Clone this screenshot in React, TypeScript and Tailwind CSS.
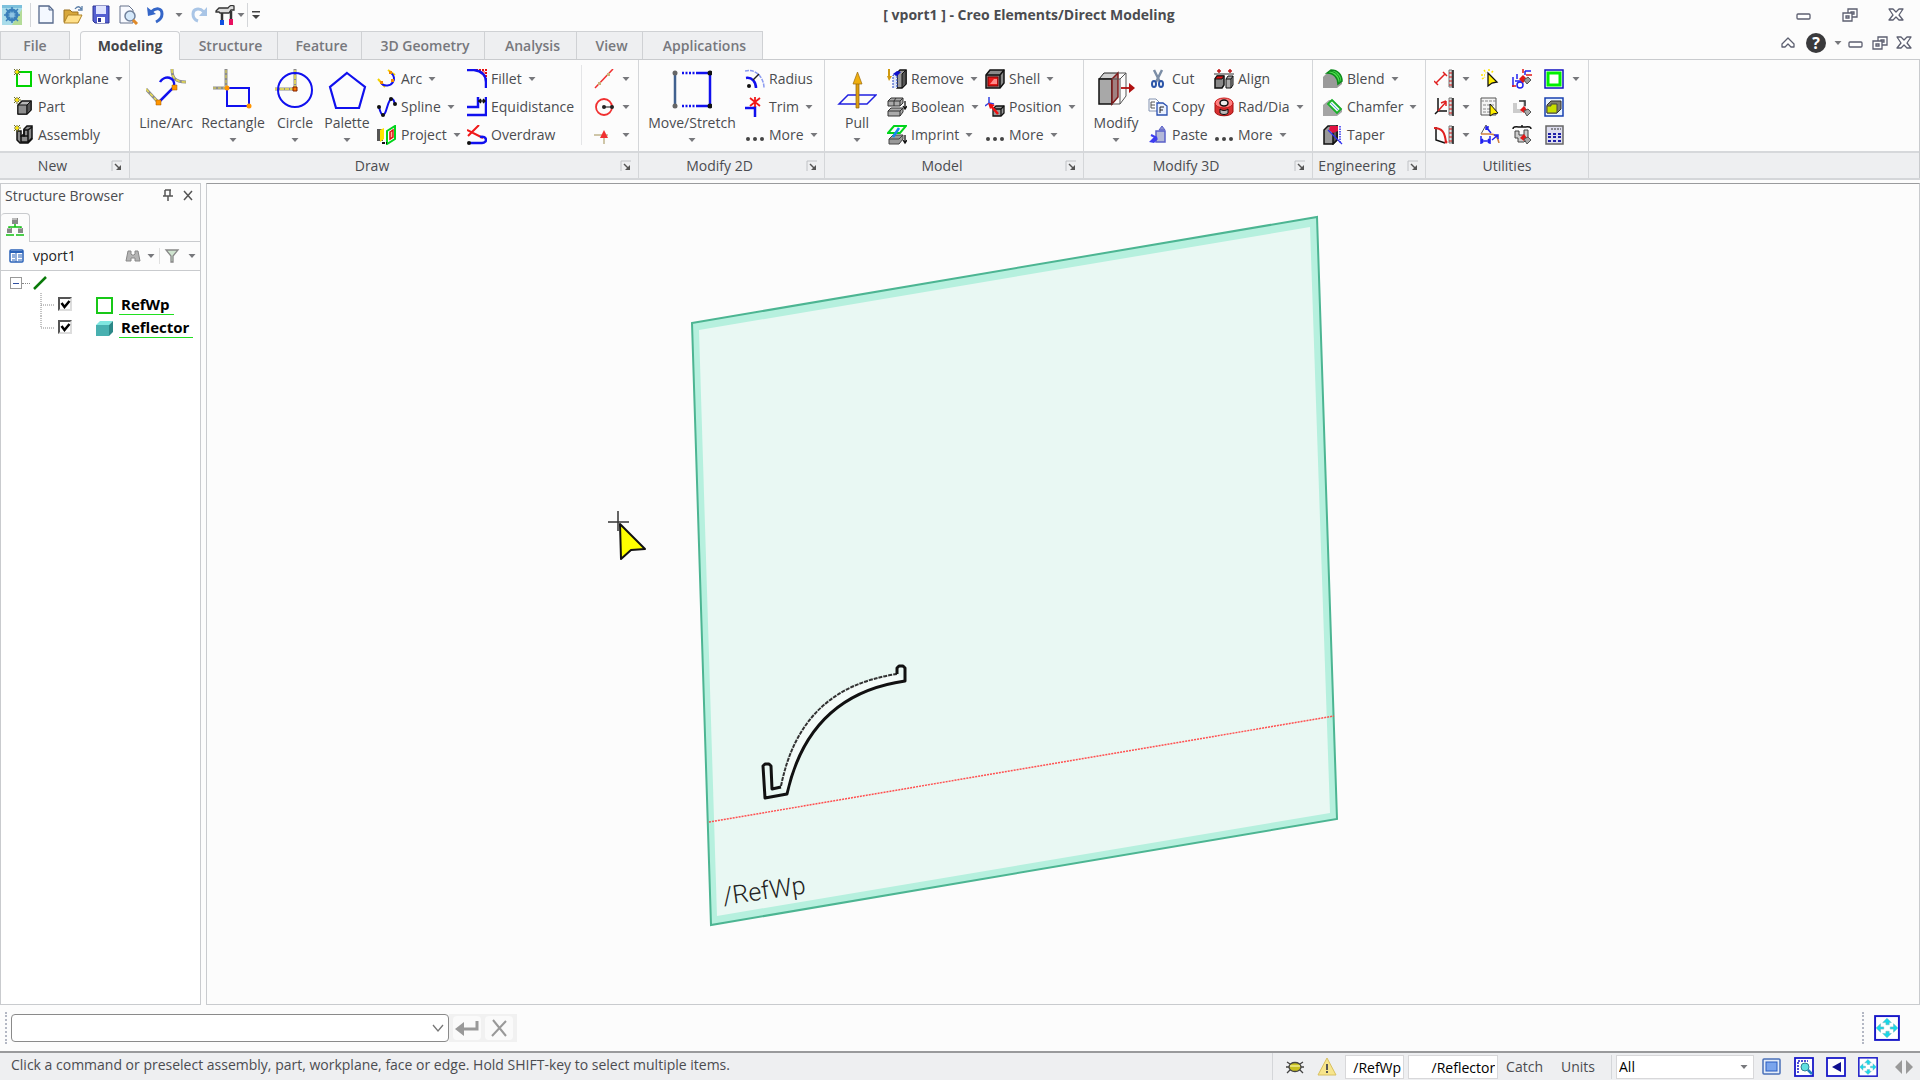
import type { ReactNode } from 'react';

type IconProps = { children: ReactNode };

const Small = ({ children }: IconProps) => (
    <svg className="w-5 h-5 shrink-0" viewBox="0 0 20 20" fill="none" aria-hidden="true">{children}</svg>
);

const Big = ({ children }: IconProps) => (
    <svg className="w-10 h-10 shrink-0" viewBox="0 0 40 40" fill="none" aria-hidden="true">{children}</svg>
);

const Caret = () => (
    <svg className="w-2 h-1 shrink-0" viewBox="0 0 8 4" aria-hidden="true">
        <path d="M0.5 0h7L4 4z" fill="#77787c"/>
    </svg>
);

const Spark = () => (
    <g>
        <path d="M0 0l6 6M6 0L0 6M3 -1v8M-1 3h8" stroke="#6b6b20" strokeWidth="1"/>
        <path d="M1.5 3h3M3 1.5v3" stroke="#ffe600" strokeWidth="2"/>
    </g>
);

/* ---------- small ribbon icons ---------- */

const WorkplaneIcon = () => (
    <Small>
        <rect x="3" y="3" width="14" height="14" stroke="#00d400" strokeWidth="2"/>
        <Spark/>
    </Small>
);

const PartIcon = () => (
    <Small>
        <path d="M4 8l4-4h9v9l-4 4H4z" fill="#b8b8b8" stroke="#111" strokeWidth="1.5"/>
        <path d="M4 8h9v9H4z" fill="#8e8e8e" stroke="#111"/>
        <path d="M13 17V8l4-4v9z" fill="#555" stroke="#111"/>
        <Spark/>
    </Small>
);

const AssemblyIcon = () => (
    <Small>
        <path d="M3 6h4v5h3v-7l3-3h5v13l-4 4H6l-3-3z" fill="#8a8a8a" stroke="#111" strokeWidth="1.5"/>
        <path d="M10 5h4v6h-4zM14 5l4-3M7 11v6h7v-6M14 17l4-4M7 11l3-2" stroke="#111" strokeWidth="1.5"/>
        <Spark/>
    </Small>
);

const ArcIcon = () => (
    <Small>
        <path d="M1 10l7 8M11 1l7 5" stroke="#f2d200" strokeWidth="2"/>
        <path d="M4 14c3 4 10 3 12-1 2-3 1-7-2-9" stroke="#1010ee" strokeWidth="2"/>
        <path d="M3 12h3v3H3zM12 2h3v3h-3zM14 10h3v3h-3z" fill="#f28a00"/>
    </Small>
);

const SplineIcon = () => (
    <Small>
        <path d="M2 10c1 4 2 8 4 8 4 0 4-16 9-16 2 0 2 3 3 5" stroke="#1010ee" strokeWidth="2"/>
        <circle cx="2" cy="10" r="2" fill="#111"/>
        <circle cx="6" cy="18" r="2" fill="#111"/>
        <circle cx="14" cy="2" r="2" fill="#111"/>
        <circle cx="18" cy="7" r="2" fill="#111"/>
    </Small>
);

const ProjectIcon = () => (
    <Small>
        <path d="M0 4h6v12H0z" fill="#555"/>
        <path d="M3 5l4-2v11l-4 3z" fill="#ffe600"/>
        <path d="M10 6l8-5v13l-8 5z" fill="#fff" stroke="#00d41a" strokeWidth="2"/>
        <path d="M13 7l3-2v7l-3 2z" fill="#ffb0a0" stroke="#e01010" strokeWidth="1.5"/>
        <path d="M5 18h5" stroke="#111" strokeWidth="2" strokeDasharray="3 1"/>
    </Small>
);

const FilletIcon = () => (
    <Small>
        <path d="M9 1h10v10" stroke="#e81010" strokeWidth="2" strokeDasharray="2 1"/>
        <path d="M11 2h7v7z" fill="#ff8a8a"/>
        <path d="M0 1h7c7 1 12 5 12 12v6" stroke="#1010ee" strokeWidth="2.5"/>
    </Small>
);

const EquidistanceIcon = () => (
    <Small>
        <path d="M0 10h11V0M0 18h19V0" stroke="#1010ee" strokeWidth="2.5"/>
        <path d="M11 4h7M14 2l-2 2 2 2M16 2l2 2-2 2" stroke="#111" strokeWidth="1.5"/>
    </Small>
);

const OverdrawIcon = () => (
    <Small>
        <path d="M0 5l16 8M12 0L1 11" stroke="#f01818" strokeWidth="2"/>
        <path d="M3 18h12M13 12c7-2 8 6 2 6" stroke="#1010ee" strokeWidth="2.5"/>
        <circle cx="2" cy="18" r="2" fill="#111"/>
    </Small>
);

const ConstLineIcon = () => (
    <Small>
        <path d="M1 19L19 0" stroke="#f03030" strokeWidth="1.5"/>
        <path d="M4 13h3v3H4zM13 4h3v3h-3z" fill="#c9b37a"/>
    </Small>
);

const ConstCircleIcon = () => (
    <Small>
        <circle cx="10" cy="10" r="8" stroke="#f03030" strokeWidth="1.8"/>
        <path d="M10 10h8" stroke="#111"/>
        <circle cx="10" cy="10" r="2" fill="#222"/>
        <circle cx="18" cy="10" r="2" fill="#222"/>
    </Small>
);

const ConstPointIcon = () => (
    <Small>
        <path d="M0 10h14M10 7v12" stroke="#cfc6a8" strokeWidth="2"/>
        <path d="M6 13l4-8 4 8z" fill="#f03030"/>
    </Small>
);

const RadiusIcon = () => (
    <Small>
        <path d="M0 2c10-3 19 6 19 17" stroke="#8a9af0" strokeWidth="1.5" strokeDasharray="4 1"/>
        <path d="M1 9c6-1 10 4 10 10" stroke="#1010ee" strokeWidth="2.5"/>
        <path d="M8 11l6-6" stroke="#222" strokeWidth="1.5"/>
        <circle cx="4" cy="17" r="2" fill="#111"/>
    </Small>
);

const TrimIcon = () => (
    <Small>
        <path d="M0 11h10M10 9v11" stroke="#1010ee" strokeWidth="2.5"/>
        <path d="M5 1l10 8M15 1L5 9M10 0v10" stroke="#f01818" strokeWidth="1.8"/>
    </Small>
);

const MoreIcon = () => (
    <Small>
        <circle cx="3" cy="14" r="2" fill="#444"/>
        <circle cx="10" cy="14" r="2" fill="#444"/>
        <circle cx="17" cy="14" r="2" fill="#444"/>
    </Small>
);

const RemoveIcon = () => (
    <Small>
        <path d="M10 4l3-3h6v14l-4 4h-5z" fill="#999" stroke="#111" strokeWidth="1.5"/>
        <path d="M15 5l4-4v14l-4 4z" fill="#555" stroke="#111"/>
        <path d="M6 19V6h4v13" fill="#dde6f8" stroke="#2040c0" strokeDasharray="2 1"/>
        <path d="M6 5l4-3 4 1-4 4z" fill="#1010cc"/>
        <path d="M2 0v8" stroke="#d09a10" strokeWidth="2"/>
        <path d="M0 7h5l-3 5z" fill="#d09a10"/>
    </Small>
);

const BooleanIcon = () => (
    <Small>
        <path d="M1 4l3-3h12v5l-3 3H1z" fill="#aaa" stroke="#333"/>
        <path d="M1 4h12l3-3M9 1L7 4v5M13 4v5" stroke="#333"/>
        <path d="M1 14l3-3h12v4l-3 4H1z" fill="#aaa" stroke="#333"/>
        <path d="M1 14h12l3-3M13 14v5" stroke="#333"/>
        <path d="M18 4v7M16 9l2 3 2-3" stroke="#111" strokeWidth="1.3"/>
    </Small>
);

const ImprintIcon = () => (
    <Small>
        <path d="M2 14l4-4h10v4l-4 5H2z" fill="#999" stroke="#444"/>
        <path d="M2 14h10l4-4" stroke="#444"/>
        <path d="M1 8l6-7h12l-6 7z" stroke="#00d41a" strokeWidth="2"/>
        <path d="M12 3L6 12" stroke="#1688f0" strokeWidth="2.5"/>
        <path d="M18 10v7M16 15l2 3 2-3" stroke="#111" strokeWidth="1.3"/>
    </Small>
);

const ShellIcon = () => (
    <Small>
        <path d="M1 6l4-5h14v13l-4 5H1z" fill="#8a8a8a" stroke="#111" strokeWidth="1.5"/>
        <path d="M15 19V6l4-5M1 6h14" stroke="#111" strokeWidth="1.5"/>
        <rect x="3" y="8" width="10" height="9" fill="#e81818" stroke="#7a0000"/>
        <path d="M5 15l4-5h3v5z" fill="#ff8a8a"/>
    </Small>
);

const PositionIcon = () => (
    <Small>
        <path d="M4 0v6l5 1M4 6l-4 3" stroke="#3040e0" strokeWidth="1.5"/>
        <path d="M8 12l3-3h8v7l-3 3H8z" fill="#999" stroke="#111" strokeWidth="1.3"/>
        <path d="M8 12h8l3-3M16 12v7" stroke="#111" strokeWidth="1.3"/>
        <path d="M13 17L6 9" stroke="#f01010" strokeWidth="2.5"/>
        <path d="M3 6l7 2-5 4z" fill="#f01010"/>
    </Small>
);

const CutIcon = () => (
    <Small>
        <path d="M6 1l6 12M14 1L8 13" stroke="#7c8ea6" strokeWidth="2.5"/>
        <ellipse cx="6" cy="15" rx="2" ry="3" stroke="#2b55a8" strokeWidth="2"/>
        <ellipse cx="13" cy="15" rx="2" ry="3" stroke="#2b55a8" strokeWidth="2"/>
    </Small>
);

const CopyIcon = () => (
    <Small>
        <path d="M1 2h7l3 3v9H1z" fill="#fff" stroke="#8292b0"/>
        <path d="M3 5h4M3 8h4M3 11h4M3 5v6" stroke="#555"/>
        <path d="M9 6h6l4 3v9H9z" fill="#eaf1ff" stroke="#2a50b0" strokeWidth="1.3"/>
        <path d="M12 16v-6h4M12 13h3" stroke="#222"/>
    </Small>
);

const PasteIcon = () => (
    <Small>
        <path d="M8 6h9v11H8z" fill="#b4b8d8" stroke="#5a60c8" strokeWidth="1.5"/>
        <path d="M11 5l3-4 3 4z" fill="#8a8ed0" stroke="#5a60c8"/>
        <path d="M1 17l6-6 3 3-4 4z" fill="#3c3cf0"/>
        <path d="M3 10l6 3" stroke="#3c3cf0" strokeWidth="2"/>
    </Small>
);

const AlignIcon = () => (
    <Small>
        <path d="M0 5h20" stroke="#333"/>
        <path d="M3 2h4M5 0v4M14 2h4M16 0v4" stroke="#c01818" strokeWidth="1.5"/>
        <path d="M1 10l2-3h7v9l-2 3H1z" fill="#888" stroke="#111" strokeWidth="1.5"/>
        <path d="M3 7h7l-2 3H1z" fill="#e01010" stroke="#111"/>
        <path d="M12 10l2-3h5v9l-2 3h-5z" fill="#aaa" stroke="#111"/>
        <path d="M12 10h5l2-3M17 10v9" stroke="#111"/>
    </Small>
);

const RadDiaIcon = () => (
    <Small>
        <path d="M1 6v9c2 5 16 5 18 0V6z" fill="#d83030" stroke="#a01010"/>
        <ellipse cx="10" cy="6" rx="9" ry="5" fill="#ff8080" stroke="#c81818"/>
        <ellipse cx="10" cy="6" rx="4" ry="3" fill="#eee" stroke="#111" strokeWidth="1.5"/>
        <path d="M6 12c2 2 6 2 8 0v4c-2 2-6 2-8 0z" fill="#bbb" stroke="#111"/>
    </Small>
);

const BlendIcon = () => (
    <Small>
        <path d="M0 8l5-5h5l9 9v3l-5 4H0z" fill="#9a9a9a"/>
        <path d="M4 4l4-3c7 0 11 5 11 11l-4 3c0-6-4-11-11-11z" fill="#4ede4e" stroke="#0c8a1a" strokeWidth="1.5"/>
        <path d="M7 2c6 1 10 5 10 11" stroke="#0c8a1a"/>
    </Small>
);

const ChamferIcon = () => (
    <Small>
        <path d="M0 8l6-5h4l9 9v3l-5 4H0z" fill="#a4a4a4"/>
        <path d="M5 7l4-4 9 9-4 4z" fill="#e9fbe9" stroke="#18b028" strokeWidth="1.8"/>
        <path d="M8 6l7 7" stroke="#60a0f0"/>
    </Small>
);

const TaperIcon = () => (
    <Small>
        <path d="M1 5l4-4h9v14l-4 4H1z" fill="#999" stroke="#111" strokeWidth="1.5"/>
        <path d="M10 19V5l4-4v14z" fill="#555" stroke="#111" strokeWidth="1.5"/>
        <path d="M7 1h8v5l-5 2-4-3z" fill="#e01040"/>
        <path d="M17 1v17" stroke="#3030f0" strokeWidth="1.5" strokeDasharray="1.5 1"/>
        <path d="M5 5l14 14" stroke="#3030f0" strokeWidth="1.3"/>
    </Small>
);

const Ruler = () => (
    <g>
        <path d="M15 1h3v17h-3z" fill="#ddd" stroke="#777"/>
        <path d="M15 4h3M15 8h3M15 12h3M15 16h3" stroke="#d01010"/>
        <path d="M19 1v18" stroke="#111" strokeWidth="1.5"/>
    </g>
);

const MeasureDistIcon = () => (
    <Small>
        <path d="M2 14L11 5M0 12l4 4M9 3l4 4" stroke="#e02020" strokeWidth="1.5"/>
        <Ruler/>
    </Small>
);

const MeasureAngleIcon = () => (
    <Small>
        <path d="M4 1v13h9M4 14l-3 3" stroke="#111" strokeWidth="1.5"/>
        <path d="M4 14l8-9M12 4l-5 2M12 4v5" stroke="#e02020" strokeWidth="1.5"/>
        <Ruler/>
    </Small>
);

const MeasureArcIcon = () => (
    <Small>
        <path d="M2 2v13l9 3" stroke="#111" strokeWidth="1.5"/>
        <path d="M0 3c8 0 11 4 12 15" stroke="#e02020" strokeWidth="2"/>
        <circle cx="12" cy="17" r="1.5" fill="#e02020"/>
        <Ruler/>
    </Small>
);

const ArrowSelectIcon = () => (
    <Small>
        <path d="M1 6h4M4 1l2 3M9 0v3M13 2l-2 2M2 10l3-2" stroke="#ffe600" strokeWidth="1.5" strokeDasharray="2 1"/>
        <path d="M8 4l9 9-5 1-4 3z" fill="#ffee00" stroke="#111" strokeWidth="1.3"/>
    </Small>
);

const ListSelectIcon = () => (
    <Small>
        <path d="M1 1h15v17H1z" fill="#f4f4f4" stroke="#555"/>
        <path d="M1 4h15M3 8h12M3 12h12M3 15h12" stroke="#888" strokeDasharray="3 1"/>
        <path d="M10 7l8 9-5 1-3 2z" fill="#ffee00" stroke="#111"/>
    </Small>
);

const DimensionIcon = () => (
    <Small>
        <path d="M1 9L6 0l3 5" stroke="#555"/>
        <path d="M1 9h9c5 0 8 3 9 9" stroke="#d08040" strokeWidth="1.5"/>
        <path d="M1 11v8M10 11v8M1 16h9M3 14l-2 2 2 2M8 14l2 2-2 2M6 2l5 6M6 5V2h3M12 15l6-5M14 10h4v4" stroke="#2020f0" strokeWidth="1.5"/>
    </Small>
);

const Flashlight = () => (
    <g>
        <path d="M8 13l4-4 3 4-3 3z" fill="#e01818"/>
        <path d="M12 14l4-2 3 3-4 4z" fill="#a8a8a8" stroke="#555"/>
    </g>
);

const Check2dIcon = () => (
    <Small>
        <path d="M1 8v10M5 5v5M3 12h7M13 2h6M13 2v4" stroke="#2020f0" strokeWidth="1.5"/>
        <circle cx="8" cy="16" r="3" stroke="#2020f0" strokeWidth="1.5"/>
        <path d="M11 0v4M14 6h6M0 17h4" stroke="#e01818" strokeWidth="1.5"/>
        <path d="M7 10l4-4 4 4-4 4z" fill="#e01818"/>
        <path d="M12 11l4-3 3 3-4 4z" fill="#999" stroke="#555"/>
    </Small>
);

const CheckPartIcon = () => (
    <Small>
        <path d="M1 6h4v6h6V3h3v7l-4 6H1z" fill="#ccc"/>
        <path d="M7 4h6v5" stroke="#333" strokeWidth="1.5"/>
        <Flashlight/>
    </Small>
);

const CheckAssemblyIcon = () => (
    <Small>
        <path d="M1 4c0-3 3-2 9-2s9-1 9 2M10 0v2" stroke="#111" strokeWidth="1.5"/>
        <path d="M3 6h4v4h5V5h4v8l-4 4H6v-4H3z" fill="#ccc" stroke="#444"/>
        <Flashlight/>
    </Small>
);

const ActiveWpIcon = () => (
    <Small>
        <rect x="1" y="1" width="18" height="18" fill="#fff" stroke="#1010c0" strokeWidth="1.5"/>
        <rect x="4" y="4" width="12" height="12" stroke="#00f000" strokeWidth="3"/>
    </Small>
);

const ActivePartIcon = () => (
    <Small>
        <rect x="1" y="1" width="18" height="18" fill="#e8f4ff" stroke="#1840b0" strokeWidth="1.5"/>
        <path d="M3 8l4-4h10v8l-4 4H3z" fill="#808070" stroke="#333"/>
        <path d="M3 9h4V7h6v9H3z" fill="#c8e000" stroke="#444"/>
    </Small>
);

const CalculatorIcon = () => (
    <Small>
        <rect x="2" y="1" width="17" height="18" fill="#dde" stroke="#666" strokeWidth="1.5"/>
        <path d="M7 4h10" stroke="#333" strokeDasharray="2 1"/>
        <path d="M4 9h13M4 12h13M4 16h13" stroke="#2020a8" strokeWidth="2" strokeDasharray="3 2"/>
    </Small>
);

/* ---------- big ribbon icons ---------- */

const LineArcIcon = () => (
    <Big>
        <path d="M0 20l12 13M26 0c0 8 2 13 14 13" stroke="#8c8c8c" strokeWidth="3"/>
        <path d="M0 20l12 13M26 0c0 8 2 13 14 13" stroke="#e8dc50" strokeWidth="1.5" strokeDasharray="4 2"/>
        <path d="M14 13c4-7 16-6 14 5L13 33" stroke="#1010ee" strokeWidth="2.5"/>
        <path d="M10 31h5v5h-5zM26 16h5v5h-5z" fill="#ff9500" stroke="#a05a00" strokeWidth=".5"/>
    </Big>
);

const RectangleIcon = () => (
    <Big>
        <path d="M13 0v17M0 19h12" stroke="#8c8c8c" strokeWidth="3"/>
        <path d="M13 1v16M0 19h12" stroke="#e8dc50" strokeWidth="1" strokeDasharray="3 2"/>
        <rect x="14" y="19" width="22" height="18" stroke="#1010ee" strokeWidth="2"/>
        <circle cx="14" cy="19" r="2.5" fill="#ff9500"/>
        <circle cx="36" cy="37" r="2.5" fill="#ff9500"/>
    </Big>
);

const CircleIcon = () => (
    <Big>
        <path d="M20 0v18M0 20h18" stroke="#8c8c8c" strokeWidth="3"/>
        <path d="M20 1v18M0 20h18" stroke="#f5e850" strokeWidth="1.5" strokeDasharray="4 1"/>
        <circle cx="20" cy="21" r="17" stroke="#1010ee" strokeWidth="2"/>
        <path d="M18 18h4v4h-4z" fill="#ff7a00" stroke="#802000"/>
    </Big>
);

const PaletteIcon = () => (
    <Big>
        <path d="M20 4l18 14-6 21H9L3 18z" stroke="#1010ee" strokeWidth="2.2"/>
    </Big>
);

const MoveStretchIcon = () => (
    <Big>
        <path d="M3 4v33" stroke="#41618f" strokeWidth="2.5"/>
        <path d="M10 4h14M10 37h14" stroke="#1010ee" strokeWidth="2.5" strokeDasharray="2 1.5"/>
        <path d="M24 4h14v33H24" stroke="#1010ee" strokeWidth="2.5"/>
        <circle cx="3" cy="4" r="2.5" fill="#666"/>
        <circle cx="3" cy="37" r="2.5" fill="#666"/>
        <circle cx="38" cy="4" r="2.5" fill="#111"/>
        <circle cx="38" cy="37" r="2.5" fill="#111"/>
    </Big>
);

const PullIcon = () => (
    <Big>
        <path d="M2 35l9-9h28l-9 9z" stroke="#2020e0" strokeWidth="1.5"/>
        <path d="M19 14h3v25h-3z" fill="#e0a010" stroke="#8a6010" strokeWidth=".7"/>
        <path d="M20.5 3l4.500 12h-9z" fill="#f0b010" stroke="#9a6a10" strokeWidth=".7"/>
    </Big>
);

const ModifyIcon = () => (
    <Big>
        <path d="M3 10l5-6h14l-6 6z" fill="#d0d0d0" stroke="#222"/>
        <path d="M3 10h13v25H3z" fill="#a8a8a8" stroke="#111" strokeWidth="1.5"/>
        <path d="M16 10l6-6v24l-6 7z" fill="#a08080" stroke="#801818" strokeWidth="1.5"/>
        <path d="M16 35h8l6-8V4h-8M24 35V10l6-6M16 10h8" stroke="#555"/>
        <path d="M25 19h8" stroke="#b01010" strokeWidth="1.8"/>
        <path d="M33 14l6 5-6 5z" fill="#b01010"/>
    </Big>
);

/* ---------- ribbon building blocks ---------- */

type ItemProps = { icon: ReactNode; label: string; menu?: boolean };

const Item = ({ icon, label, menu }: ItemProps) => (
    <button type="button" className="flex items-center gap-1 h-7 whitespace-nowrap">
        {icon}
        <span>{label}</span>
        {menu && <span className="pl-0.5"><Caret/></span>}
    </button>
);

const IconItem = ({ icon, label, menu }: ItemProps) => (
    <button type="button" aria-label={label} className="flex items-center gap-2 h-7">
        {icon}
        {menu && <Caret/>}
    </button>
);

const BigItem = ({ icon, label, menu, width }: ItemProps & { width: string }) => (
    <button type="button" className={`flex flex-col items-center pt-1 whitespace-nowrap ${width}`}>
        {icon}
        <span className="h-[29px] leading-7">{label}</span>
        {menu && <Caret/>}
    </button>
);

const Column = ({ children, className = '' }: { children: ReactNode; className?: string }) => (
    <div className={`flex flex-col items-start ${className}`}>{children}</div>
);

type GroupProps = { title: string; width: string; launcher?: boolean; children: ReactNode };

const Group = ({ title, width, launcher = true, children }: GroupProps) => (
    <section aria-label={title} className={`flex flex-col shrink-0 border-r border-[#d4d6d9] ${width}`}>
        <div className="flex items-start h-[91px] pt-[5px]">{children}</div>
        <div className="flex items-center h-[27px] border-t-2 border-[#d6d8db] bg-[#eeeff1]">
            <span className="flex-1 text-center">{title}</span>
            {launcher && (
                <button type="button" aria-label={`${title} options`} className="w-6 pl-1.5">
                    <svg className="w-3 h-3" viewBox="0 0 12 12" fill="none">
                        <path d="M1 11V1h10" stroke="#c0c2c6"/>
                        <path d="M4 4l4 4" stroke="#555" strokeWidth="1.5"/>
                        <path d="M10 5v5H5z" fill="#555"/>
                    </svg>
                </button>
            )}
        </div>
    </section>
);

/* ---------- title bar ---------- */

const MinimizeGlyph = () => (
    <svg className="w-4 h-4" viewBox="0 0 16 16" fill="none">
        <rect x="1" y="7" width="13" height="5" rx="1" fill="#fff" stroke="#5c5f70" strokeWidth="1.3"/>
    </svg>
);

const RestoreGlyph = () => (
    <svg className="w-4 h-4" viewBox="0 0 16 16" fill="none">
        <path d="M6 2h9v8H6zM9 5h3v2H9z" fill="#fff" stroke="#5c5f70" strokeWidth="1.3"/>
        <path d="M1 6h9v8H1z" fill="#fff" stroke="#5c5f70" strokeWidth="1.3"/>
        <path d="M4 9h3v2H4z" stroke="#5c5f70" strokeWidth="1.3"/>
    </svg>
);

const CloseGlyph = () => (
    <svg className="w-4 h-4" viewBox="0 0 16 16" fill="none">
        <path d="M1 2h4l3 3 3-3h4l-4 6 4 5h-4l-3-3-3 3H1l4-5z" fill="#fff" stroke="#5c5f70" strokeWidth="1.3" strokeLinejoin="round"/>
    </svg>
);

const TitleBar = () => (
    <header className="flex items-center h-[31px] pb-0.5">
        <div className="flex items-center">
            <svg className="w-5 h-5 ml-0.5" viewBox="0 0 20 20" fill="none">
                <path d="M0 0h20v20H0z" fill="#a9dcea"/>
                <path d="M10 20h10V4z" fill="#b4dc98"/>
                <path d="M0 0h20v3H0z" fill="#7cc0dc"/>
                <circle cx="10" cy="10" r="5" stroke="#3a7fba" strokeWidth="3"/>
                <path d="M10 2v16M2 10h16M4 4l12 12M16 4L4 16" stroke="#3a7fba" strokeWidth="1.5"/>
                <circle cx="10" cy="10" r="2.5" fill="#8cc4e4"/>
            </svg>
            <span className="w-px h-6 ml-2 bg-[#d4d6d9]"/>
            <button type="button" aria-label="New" className="ml-1.5">
                <Small>
                    <path d="M2 1h10l4 4v13H2z" fill="#f4f8ff" stroke="#56688a" strokeWidth="1.3"/>
                    <path d="M12 1v4h4z" fill="#b8c8e0" stroke="#56688a"/>
                </Small>
            </button>
            <button type="button" aria-label="Open" className="ml-1.5">
                <Small>
                    <path d="M1 5h6l2 2h6v10H1z" fill="#d8a83c" stroke="#9a7020"/>
                    <path d="M5 10h14l-4 8H1z" fill="#ffe08a" stroke="#b08428"/>
                    <path d="M12 4c2-3 5-3 6 0M19 1v4h-4" stroke="#5a7ea8" strokeWidth="1.3"/>
                </Small>
            </button>
            <button type="button" aria-label="Save" className="ml-2">
                <Small>
                    <path d="M2 1h16v17H4l-2-2z" fill="#5560d0" stroke="#2c3494"/>
                    <path d="M5 1h10v8H5z" fill="#dfe4ff"/>
                    <path d="M6 12h8v6H6z" fill="#fff"/>
                    <path d="M7 13h3v4H7z" fill="#2c3494"/>
                </Small>
            </button>
            <button type="button" aria-label="Print preview" className="ml-2">
                <Small>
                    <path d="M1 1h9l4 4v13H1z" fill="#f8faff" stroke="#66738c"/>
                    <circle cx="11" cy="11" r="5" fill="#d4e8fa" stroke="#70819c" strokeWidth="1.5"/>
                    <path d="M14 15l4 4" stroke="#e08a28" strokeWidth="3"/>
                </Small>
            </button>
            <button type="button" aria-label="Undo" className="ml-2">
                <Small>
                    <path d="M4 7c5-5 11-4 11 2 0 4-2 6-6 8" stroke="#3566c8" strokeWidth="3"/>
                    <path d="M0 2l1 9 8-2z" fill="#3566c8"/>
                </Small>
            </button>
            <button type="button" aria-label="Undo history" className="ml-2"><Caret/></button>
            <button type="button" aria-label="Redo" className="ml-1.5">
                <Small>
                    <path d="M15 7C10 2 4 4 4 9c0 4 2 6 5 7" stroke="#a9c5e6" strokeWidth="3"/>
                    <path d="M18 2v9h-8z" fill="#a9c5e6"/>
                </Small>
            </button>
            <button type="button" aria-label="Tools" className="flex items-center gap-0.5 ml-1.5">
                <Small>
                    <path d="M1 6l3-3h9c2-3 4-3 6-2v4h-3l-2 3H5L4 7H1z" fill="#ddd" stroke="#333" strokeWidth="1.3"/>
                    <path d="M7 8v7M16 6v8" stroke="#333" strokeWidth="2.5"/>
                    <path d="M5 15h4v5H5z" fill="#1050e0"/>
                    <path d="M14 14h4v6h-4z" fill="#e81060"/>
                </Small>
                <Caret/>
            </button>
            <span className="w-px h-6 ml-0.5 bg-[#d4d6d9]"/>
            <button type="button" aria-label="Customize toolbar" className="ml-0.5">
                <svg className="w-3 h-3" viewBox="0 0 12 12"><path d="M2 2h8v1.500H2zM2 6h8l-4 4z" fill="#444"/></svg>
            </button>
        </div>
        <h1 className="flex-1 text-center font-bold">[ vport1 ] - Creo Elements/Direct Modeling</h1>
        <div className="flex items-center gap-[30px] pr-4">
            <button type="button" aria-label="Minimize"><MinimizeGlyph/></button>
            <button type="button" aria-label="Restore"><RestoreGlyph/></button>
            <button type="button" aria-label="Close"><CloseGlyph/></button>
        </div>
    </header>
);

/* ---------- tabs ---------- */

const tabs = [
    { name: 'Structure', width: 'w-[98px]' },
    { name: 'Feature', width: 'w-[84px]' },
    { name: '3D Geometry', width: 'w-[123px]' },
    { name: 'Analysis', width: 'w-[92px]' },
    { name: 'View', width: 'w-[66px]' },
    { name: 'Applications', width: 'w-[120px]' },
];

const TabBar = () => (
    <nav className="flex h-[29px] text-[#77787d] font-semibold border-b border-[#c9cbce]">
        <button type="button" className="w-[70px] border border-b-0 border-[#cfd1d4] bg-[#eeeff1]">File</button>
        <button type="button" className="w-[100px] h-[29px] ml-2.5 border border-b-0 border-[#cfd1d4] rounded-t bg-[#fcfcfc] text-[#45464a] font-bold">Modeling</button>
        {tabs.map((tab) => (
            <button
                key={tab.name}
                type="button"
                className={`pl-1 border-t border-r border-[#cfd1d4] bg-[#eeeff1] whitespace-nowrap ${tab.width}`}
            >
                {tab.name}
            </button>
        ))}
        <div className="flex items-center gap-1.5 ml-auto pr-2 pb-1">
            <button type="button" aria-label="Collapse ribbon">
                <svg className="w-4 h-4" viewBox="0 0 16 16" fill="none">
                    <path d="M2 9l6-6 6 6v3h-3L8 9l-3 3H2z" fill="#fff" stroke="#5c5f70" strokeWidth="1.3" strokeLinejoin="round"/>
                </svg>
            </button>
            <button type="button" aria-label="Help" className="flex items-center justify-center w-5 h-5 ml-1 rounded-full bg-[#3a3a3c] text-white text-base font-bold leading-5">?</button>
            <button type="button" aria-label="Help menu" className="ml-0.5"><Caret/></button>
            <button type="button" aria-label="Minimize viewport"><MinimizeGlyph/></button>
            <button type="button" aria-label="Restore viewport" className="ml-0.5"><RestoreGlyph/></button>
            <button type="button" aria-label="Close viewport" className="ml-0.5"><CloseGlyph/></button>
        </div>
    </nav>
);

/* ---------- ribbon ---------- */

const Ribbon = () => (
    <div className="flex border-b-2 border-[#d4d6d9]">
        <Group title="New" width="w-[130px]">
            <Column className="pl-3.5">
                <Item icon={<WorkplaneIcon/>} label="Workplane" menu/>
                <Item icon={<PartIcon/>} label="Part"/>
                <Item icon={<AssemblyIcon/>} label="Assembly"/>
            </Column>
        </Group>

        <Group title="Draw" width="w-[509px]">
            <BigItem icon={<LineArcIcon/>} label="Line/Arc" width="w-16 ml-1"/>
            <BigItem icon={<RectangleIcon/>} label="Rectangle" width="w-[70px]" menu/>
            <BigItem icon={<CircleIcon/>} label="Circle" width="w-[54px]" menu/>
            <BigItem icon={<PaletteIcon/>} label="Palette" width="w-[50px]" menu/>
            <Column className="w-[90px] ml-[5px]">
                <Item icon={<ArcIcon/>} label="Arc" menu/>
                <Item icon={<SplineIcon/>} label="Spline" menu/>
                <Item icon={<ProjectIcon/>} label="Project" menu/>
            </Column>
            <Column className="w-[114px]">
                <Item icon={<FilletIcon/>} label="Fillet" menu/>
                <Item icon={<EquidistanceIcon/>} label="Equidistance"/>
                <Item icon={<OverdrawIcon/>} label="Overdraw"/>
            </Column>
            <span className="w-px h-20 mr-3 bg-[#e4e5e7]"/>
            <Column>
                <IconItem icon={<ConstLineIcon/>} label="Construction line" menu/>
                <IconItem icon={<ConstCircleIcon/>} label="Construction circle" menu/>
                <IconItem icon={<ConstPointIcon/>} label="Construction point" menu/>
            </Column>
        </Group>

        <Group title="Modify 2D" width="w-[186px]">
            <BigItem icon={<MoveStretchIcon/>} label="Move/Stretch" width="w-[90px] ml-2" menu/>
            <Column className="ml-2">
                <Item icon={<RadiusIcon/>} label="Radius"/>
                <Item icon={<TrimIcon/>} label="Trim" menu/>
                <Item icon={<MoreIcon/>} label="More" menu/>
            </Column>
        </Group>

        <Group title="Model" width="w-[259px]">
            <BigItem icon={<PullIcon/>} label="Pull" width="w-12 ml-2" menu/>
            <Column className="w-[98px] ml-1.5">
                <Item icon={<RemoveIcon/>} label="Remove" menu/>
                <Item icon={<BooleanIcon/>} label="Boolean" menu/>
                <Item icon={<ImprintIcon/>} label="Imprint" menu/>
            </Column>
            <Column>
                <Item icon={<ShellIcon/>} label="Shell" menu/>
                <Item icon={<PositionIcon/>} label="Position" menu/>
                <Item icon={<MoreIcon/>} label="More" menu/>
            </Column>
        </Group>

        <Group title="Modify 3D" width="w-[229px]">
            <BigItem icon={<ModifyIcon/>} label="Modify" width="w-12 ml-2" menu/>
            <Column className="w-[66px] ml-2">
                <Item icon={<CutIcon/>} label="Cut"/>
                <Item icon={<CopyIcon/>} label="Copy"/>
                <Item icon={<PasteIcon/>} label="Paste"/>
            </Column>
            <Column>
                <Item icon={<AlignIcon/>} label="Align"/>
                <Item icon={<RadDiaIcon/>} label="Rad/Dia" menu/>
                <Item icon={<MoreIcon/>} label="More" menu/>
            </Column>
        </Group>

        <Group title="Engineering" width="w-[113px]">
            <Column className="pl-2.5">
                <Item icon={<BlendIcon/>} label="Blend" menu/>
                <Item icon={<ChamferIcon/>} label="Chamfer" menu/>
                <Item icon={<TaperIcon/>} label="Taper"/>
            </Column>
        </Group>

        <Group title="Utilities" width="w-[163px]" launcher={false}>
            <Column className="pl-2">
                <IconItem icon={<MeasureDistIcon/>} label="Measure distance" menu/>
                <IconItem icon={<MeasureAngleIcon/>} label="Measure angle" menu/>
                <IconItem icon={<MeasureArcIcon/>} label="Measure length" menu/>
            </Column>
            <Column className="ml-2.5">
                <IconItem icon={<ArrowSelectIcon/>} label="Select"/>
                <IconItem icon={<ListSelectIcon/>} label="Select from list"/>
                <IconItem icon={<DimensionIcon/>} label="Dimensions"/>
            </Column>
            <Column className="ml-3">
                <IconItem icon={<Check2dIcon/>} label="Check 2D"/>
                <IconItem icon={<CheckPartIcon/>} label="Check part"/>
                <IconItem icon={<CheckAssemblyIcon/>} label="Check assembly"/>
            </Column>
            <Column className="ml-3">
                <IconItem icon={<ActiveWpIcon/>} label="Active workplane" menu/>
                <IconItem icon={<ActivePartIcon/>} label="Active part"/>
                <IconItem icon={<CalculatorIcon/>} label="Calculator"/>
            </Column>
        </Group>

        <div className="flex flex-col flex-1 border-r border-[#c9cbce]">
            <div className="h-[91px]"/>
            <div className="h-[27px] border-t-2 border-[#d6d8db] bg-[#eeeff1]"/>
        </div>
    </div>
);

/* ---------- structure browser ---------- */

const TreeRow = ({ name, icon, last }: { name: string; icon: ReactNode; last?: boolean }) => (
    <li className="flex items-center h-[23px]">
        <svg className="w-4 h-[23px] ml-[39px]" viewBox="0 0 16 23" fill="none">
            <path d={last ? 'M1 0v12h13' : 'M1 0v23M1 12h13'} stroke="#888" strokeDasharray="1 1"/>
        </svg>
        <label className="flex items-center">
            <span className="grid w-4 h-4 ml-0.5">
                <input
                    type="checkbox"
                    defaultChecked
                    className="w-[14px] h-[14px] col-start-1 row-start-1 appearance-none bg-white border-2 border-r-[#ddd] border-b-[#ddd] border-t-[#555] border-l-[#555]"
                />
                <svg className="w-[14px] h-[14px] col-start-1 row-start-1 pointer-events-none" viewBox="0 0 14 14" fill="none">
                    <path d="M3.5 6l3 4 5-6" stroke="#000" strokeWidth="2.5"/>
                </svg>
            </span>
            <span className="ml-[21px]">{icon}</span>
            <span className="ml-1 pl-0.5 pr-1 h-5 leading-[18px] text-[15px] font-bold text-black border-b border-[#20e020]">{name}</span>
        </label>
    </li>
);

const StructureBrowser = () => (
    <aside className="flex flex-col w-[201px] shrink-0 border border-[#c9cbce]">
        <div className="flex items-center h-[29px] pl-1 pr-1 pb-1.5">
            <h2 className="flex-1">Structure Browser</h2>
            <button type="button" aria-label="Pin" className="mr-1">
                <svg className="w-4 h-4" viewBox="0 0 16 16" fill="none"><path d="M5 2h6M5 2v6M10 2v6M3 8h10M8 8v5" stroke="#555" strokeWidth="1.5"/></svg>
            </button>
            <button type="button" aria-label="Close panel">
                <svg className="w-4 h-4" viewBox="0 0 16 16" fill="none"><path d="M4 3l8 9M12 3l-8 9" stroke="#555" strokeWidth="1.5"/></svg>
            </button>
        </div>
        <div className="flex h-[29px]">
            <button type="button" aria-label="Structure tree" className="flex items-center justify-center w-[29px] pb-1 border-t border-r border-[#c9cbce] rounded-t">
                <Small>
                    <path d="M10 8v3M4 14v-3h12v3M1 19h8M11 19h8" stroke="#10c010" strokeWidth="1.5"/>
                    <path d="M7 2h6v6H7zM2 12h5v5H2zM13 12h5v5h-5z" fill="#888"/>
                    <path d="M7 2h5v2H7zM2 12h4v1H2zM13 12h4v1h-4z" fill="#bbb"/>
                </Small>
            </button>
            <div className="flex-1 border-b border-[#c9cbce]"/>
        </div>
        <div className="flex items-center h-[29px] pl-2 pr-1 border-b border-[#c9cbce]">
            <svg className="w-4 h-4" viewBox="0 0 16 16" fill="none">
                <rect x="1" y="2" width="13" height="12" rx="1" fill="#fff" stroke="#2a62b8" strokeWidth="1.5"/>
                <path d="M1 3h13v2H1z" fill="#2a62b8"/>
                <path d="M3 7h3M3 9h3M3 12h3M9 7h4M9 9h4M9 12h4" stroke="#2a62b8"/>
                <path d="M7 5v9" stroke="#2a62b8"/>
            </svg>
            <span className="flex-1 ml-2 text-[#222]">vport1</span>
            <button type="button" aria-label="Find" className="flex items-center gap-1.5">
                <svg className="w-4 h-4" viewBox="0 0 16 16" fill="none">
                    <path d="M3 3h3v3l1 1h2l1-1V3h3l2 10h-5v-3H6v3H1z" fill="#b4b4b4" stroke="#888"/>
                </svg>
                <Caret/>
            </button>
            <span className="w-px h-4 mx-1 bg-[#e0e0e0]"/>
            <button type="button" aria-label="Filter" className="flex items-center gap-2">
                <svg className="w-4 h-4" viewBox="0 0 16 16" fill="none">
                    <path d="M2 2h12L9 8v6H7V8z" fill="#cfe4cf" stroke="#888" strokeWidth="1.3"/>
                </svg>
                <Caret/>
            </button>
        </div>
        <div className="flex-1 pt-0.5 bg-white">
            <div className="flex items-center h-5 pl-[9px]">
                <button type="button" aria-label="Collapse" className="flex items-center justify-center w-3 h-3 border border-[#999]">
                    <span className="w-1.5 h-px bg-[#3050a0]"/>
                </button>
                <span className="w-2 border-t border-dotted border-[#888]"/>
                <svg className="w-4 h-4 ml-0.5" viewBox="0 0 16 16"><path d="M2 14L14 2" stroke="#0a7a0a" strokeWidth="2.5"/></svg>
            </div>
            <ul>
                <TreeRow
                    name="RefWp"
                    icon={<Small><rect x="2" y="3" width="15" height="15" stroke="#18c818" strokeWidth="2"/></Small>}
                />
                <TreeRow
                    name="Reflector"
                    last
                    icon={
                        <Small>
                            <path d="M1 7l4-4h13l-4 4z" fill="#7fe6e0"/>
                            <path d="M1 7h13v11H1z" fill="#48b0b0"/>
                            <path d="M14 7l4-4v11l-4 4z" fill="#2c8888"/>
                        </Small>
                    }
                />
            </ul>
        </div>
    </aside>
);

/* ---------- 3D viewport ---------- */

const Viewport = () => (
    <main className="flex-1 min-w-0 min-h-0 ml-[5px] border border-[#c9cbce] border-t-[#9a9b9d]">
        <svg className="block w-full h-full" viewBox="207 184 1712 820" role="img" aria-label="Workplane RefWp with part Reflector">
            <path d="M692 323L1317 217L1337 819L711 925z" fill="#b6f0de" stroke="#4cb592" strokeWidth="2"/>
            <path d="M699 330L1310 227L1330 813L717 916z" fill="#e9f8f3"/>
            <path d="M709 822L1334 716" stroke="#ff5050" strokeWidth="1.500" strokeDasharray="2 1"/>

            {/* profile of the reflector: thick cut faces, lighter back edge */}
            <path d="M781 786C794 722 830 684 897 674L905 681C842 690 802 726 787 794z" fill="#f4fcf9"/>
            <path d="M781 786C794 722 830 684 897 674" fill="none" stroke="#333" strokeWidth="2" strokeDasharray="4 1"/>
            <path d="M897 674v-6l2-2h4l2 2v13C842 690 802 726 787 794L765 798L763 766l2-2h4l2 2 1 23 9-2" fill="none" stroke="#111" strokeWidth="3" strokeLinejoin="round"/>

            <text x="724" y="905" transform="rotate(-8 724 905)" fill="#222" fontFamily="Roboto, sans-serif" fontSize="25" fontWeight="300">/RefWp</text>

            <path d="M608 522h21M618 511v20" stroke="#333" strokeWidth="1.500"/>
            <path d="M620 524L645 549L631 550L621 559z" fill="#ffff00" stroke="#111" strokeWidth="2" strokeLinejoin="round"/>
        </svg>
    </main>
);

/* ---------- command line and status bar ---------- */

const Grip = () => <span className="w-0 h-8 border-l-2 border-dotted border-[#b4b8c4]"/>;

const FitIcon = ({ className }: { className: string }) => (
    <svg className={className} viewBox="0 0 24 24" fill="none">
        <rect x="1" y="1" width="22" height="22" fill="#fff" stroke="#1818c8" strokeWidth="1.8"/>
        <path d="M12 3l4 4h-2v2h-3V7H8zM12 21l4-4h-2v-2h-3v2H8zM2 12l4-4v3h3v2H6v3zM22 12l-4-4v3h-3v2h3v3z" fill="#18d8e8" stroke="#70b0b8" strokeWidth=".5"/>
    </svg>
);

const CommandLine = () => (
    <div className="flex items-center h-[46px] pl-[5px]">
        <Grip/>
        <div className="flex items-center h-7 w-[438px] ml-1 border border-[#8a8a8a] rounded-sm bg-white">
            <input type="text" aria-label="Command" className="flex-1 min-w-0 h-full px-1 outline-none"/>
            <button type="button" aria-label="Command history" className="mr-1">
                <svg className="w-3 h-3" viewBox="0 0 12 12" fill="none"><path d="M1 3l5 6 5-6" stroke="#777" strokeWidth="1.3"/></svg>
            </button>
        </div>
        <div className="flex items-center gap-1 h-7 px-1 bg-[#f1f1f1]">
            <button type="button" aria-label="Enter" className="flex items-center justify-center w-7 h-6 rounded bg-[#fafafa]">
                <svg className="w-6 h-5" viewBox="0 0 24 20" fill="none">
                    <path d="M22 3v8H8" stroke="#999" strokeWidth="3"/>
                    <path d="M0 11l9-7v14z" fill="#999"/>
                </svg>
            </button>
            <button type="button" aria-label="Cancel" className="flex items-center justify-center w-7 h-6 rounded bg-[#fafafa]">
                <svg className="w-5 h-5" viewBox="0 0 20 20" fill="none"><path d="M4 2l13 16M17 3L3 18" stroke="#999" strokeWidth="2"/></svg>
            </button>
        </div>
        <div className="flex items-center gap-2.5 ml-auto pr-5">
            <Grip/>
            <button type="button" aria-label="Fit view"><FitIcon className="w-[26px] h-[26px]"/></button>
        </div>
    </div>
);

const StatusBar = () => (
    <footer className="flex items-center h-[30px] border-t-2 border-[#999a9c] bg-[#eeeff1]">
        <p className="flex-1 pl-[11px] pb-1 whitespace-nowrap">
            Click a command or preselect assembly, part, workplane, face or edge. Hold SHIFT-key to select multiple items.
        </p>
        <span className="w-px h-full bg-[#d4d6d9]"/>
        <button type="button" aria-label="Debug" className="ml-3">
            <Small>
                <path d="M2 5l3 2M18 5l-3 2M1 10h3M19 10h-3M2 16l3-3M18 16l-3-3" stroke="#444" strokeWidth="1.3"/>
                <ellipse cx="10" cy="10" rx="6" ry="4.500" fill="#c8c020" stroke="#444" strokeWidth="1.3"/>
                <path d="M5 9h10" stroke="#f0ee90" strokeWidth="1.500"/>
            </Small>
        </button>
        <button type="button" aria-label="Warnings" className="ml-3">
            <Small>
                <path d="M10 1l9 17H1z" fill="#f7e58c" stroke="#d8c060" strokeLinejoin="round"/>
                <path d="M10 7v6M10 14v2" stroke="#555" strokeWidth="2"/>
            </Small>
        </button>
        <input type="text" aria-label="Active workplane" readOnly value="/RefWp" className="w-[59px] h-6 ml-2 pr-0.5 text-right text-black bg-white border border-[#d8d8da]"/>
        <input type="text" aria-label="Active part" readOnly value="/Reflector" className="w-[90px] h-6 ml-1 pr-0.5 text-right text-black bg-white border border-[#d8d8da]"/>
        <button type="button" className="ml-2">Catch</button>
        <button type="button" className="ml-[18px]">Units</button>
        <span className="w-px h-6 ml-4 bg-[#d4d6d9]"/>
        <div className="grid items-center w-[138px] h-6 ml-1">
            <select aria-label="Selection filter" className="w-full h-full col-start-1 row-start-1 pl-0.5 appearance-none text-black bg-white border border-[#d8d8da]">
                <option>All</option>
            </select>
            <span className="justify-self-end col-start-1 row-start-1 flex mr-1.5 pointer-events-none"><Caret/></span>
        </div>
        <div className="flex items-center gap-3 ml-2 pr-1.5">
            <button type="button" aria-label="Display">
                <Small>
                    <rect x="1" y="2" width="17" height="15" rx="1" fill="#e4ecf8" stroke="#4a70b8" strokeWidth="1.500"/>
                    <rect x="4" y="5" width="11" height="9" fill="#7aa4ec" stroke="#2a5cc0"/>
                </Small>
            </button>
            <button type="button" aria-label="Zoom window">
                <Small>
                    <rect x="1" y="1" width="18" height="18" fill="#fff" stroke="#1818c8" strokeWidth="1.800"/>
                    <path d="M4 16V4h10" stroke="#1818c8" strokeWidth="1.500" strokeDasharray="2 1"/>
                    <circle cx="11" cy="10" r="4" fill="#60e0e0" stroke="#308090"/>
                    <path d="M14 13l4 4" stroke="#2080c0" strokeWidth="2.500"/>
                </Small>
            </button>
            <button type="button" aria-label="Previous view">
                <Small>
                    <rect x="1" y="1" width="18" height="18" fill="#fff" stroke="#1818c8" strokeWidth="1.800"/>
                    <path d="M15 5v10l-9-5z" fill="#101090"/>
                </Small>
            </button>
            <button type="button" aria-label="Fit"><FitIcon className="w-5 h-5"/></button>
            <button type="button" aria-label="Scroll" className="ml-1">
                <Small><path d="M8 3v14l-7-7zM12 3v14l7-7z" fill="#999"/></Small>
            </button>
        </div>
    </footer>
);

export default function App() {
    return (
        <div className="flex flex-col min-h-screen bg-[#fcfcfc] text-[#4b4c50] text-sm leading-5 font-['Open_Sans',sans-serif]">
            <TitleBar/>
            <TabBar/>
            <Ribbon/>
            <div className="flex flex-1 min-h-0 pt-[3px]">
                <StructureBrowser/>
                <Viewport/>
            </div>
            <CommandLine/>
            <StatusBar/>
        </div>
    );
}
